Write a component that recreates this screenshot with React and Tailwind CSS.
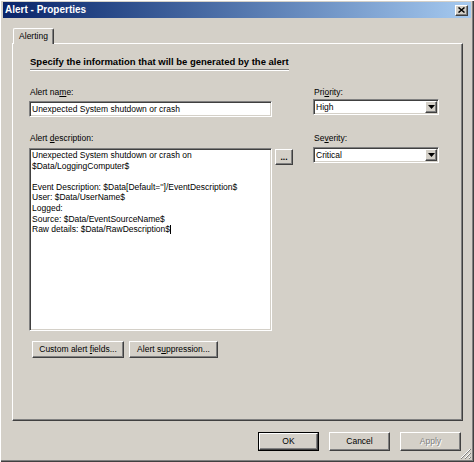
import React from 'react';

const sunken =
  'border border-t-[#808080] border-l-[#808080] border-b-white border-r-white shadow-[inset_1px_1px_#404040,inset_-1px_-1px_#d4d0c8]';
const raised =
  'border border-t-white border-l-white border-b-[#404040] border-r-[#404040] shadow-[inset_-1px_-1px_#808080,inset_1px_1px_#d4d0c8]';

const Dropdown = ({ value }) => (
  <div className={`flex items-center h-[16px] w-[126px] bg-white ${sunken}`}>
    <span className="flex-1 pl-[2px] text-[8.5px] leading-none">{value}</span>
    <div
      className={`w-[12px] h-[12px] mr-px flex items-center justify-center bg-[#d4d0c8] ${raised}`}
    >
      <svg width="7" height="4" viewBox="0 0 7 4">
        <path d="M0 0h7L3.5 4z" fill="#000" />
      </svg>
    </div>
  </div>
);

const Button = ({ children, className = '', disabled }) => (
  <div
    className={`flex items-center justify-center bg-[#d4d0c8] text-[8.5px] leading-none ${raised} ${className} ${
      disabled ? 'text-[#808080] [text-shadow:1px_1px_#fff]' : 'text-black'
    }`}
  >
    <span>{children}</span>
  </div>
);

const Label = ({ children, className = '' }) => (
  <div className={`ml-px text-[8.5px] leading-[12px] ${className}`}>{children}</div>
);

const description = [
  'Unexpected System shutdown or crash on',
  '$Data/LoggingComputer$',
  '',
  "Event Description: $Data[Default='']/EventDescription$",
  'User: $Data/UserName$',
  'Logged:',
  'Source: $Data/EventSourceName$',
];

export default function App() {
  return (
    <div className="relative w-[474px] h-[462px] bg-[#d4d0c8] flex flex-col px-[3px] pt-[2px] font-['Liberation_Sans',Arial,sans-serif] text-black shadow-[inset_1px_1px_#fff,inset_-1px_-1px_#404040,inset_-2px_-2px_#808080]">
      {/* title bar */}
      <div className="h-[16px] flex items-center justify-between bg-linear-to-r from-[#0a246a] to-[#a6caf0] pl-[2px] pr-[3px]">
        <span className="text-white font-bold text-[10px] leading-none">Alert - Properties</span>
        <div className={`w-[13px] h-[11px] flex items-center justify-center bg-[#d4d0c8] ${raised}`}>
          <svg width="7" height="6" viewBox="0 0 7 6">
            <path d="M0.5 0.5L6.5 5.5M6.5 0.5L0.5 5.5" stroke="#000" strokeWidth="1.5" />
          </svg>
        </div>
      </div>

      {/* tab + page */}
      <div className="flex flex-col pl-[9px] pt-[10px]">
        <div className="relative z-10 -mb-px ml-px w-[41px] h-[16px] bg-[#d4d0c8] border-l border-t border-white border-r border-r-[#404040] rounded-t-[2px] shadow-[inset_-1px_0_#808080] flex items-center justify-center">
          <span className="text-[8.5px] leading-none">Alerting</span>
        </div>
        <div className="w-[451px] h-[378px] border border-t-white border-l-white border-r-[#404040] border-b-[#404040] shadow-[inset_-1px_-1px_#808080] pl-[16px] pt-[12px]">
          <div className="ml-px w-fit font-bold text-[9.5px] leading-[12px] pb-px border-b border-[#808080] shadow-[0_1px_#fff]">
            Specify the information that will be generated by the alert
          </div>

          <div className="flex mt-[16px]">
            <div className="w-[264px] flex flex-col">
              <Label className="mb-[3px]">
                Alert na<u>m</u>e:
              </Label>
              <div className={`w-[243px] h-[16px] bg-white flex items-center pl-[2px] ${sunken}`}>
                <span className="text-[8.5px] leading-none">Unexpected System shutdown or crash</span>
              </div>

              <Label className="mt-[15px] mb-[4px]">
                Alert <u>d</u>escription:
              </Label>
              <div className="flex gap-[3px]">
                <div className={`w-[243px] h-[183px] bg-white pl-[2px] pt-px ${sunken}`}>
                  {description.map((line, i) => (
                    <div key={i} className="text-[8.5px] leading-[10.6px] h-[10.6px] whitespace-pre">
                      {line}
                    </div>
                  ))}
                  <div className="text-[8.5px] leading-[10.6px] h-[10.6px] flex items-center">
                    <span>Raw details: $Data/RawDescription$</span>
                    <span className="inline-block w-px h-[9px] bg-black" />
                  </div>
                </div>
                <Button className="w-[18px] h-[16px] mt-px font-bold">...</Button>
              </div>

              <div className="flex gap-[5px] mt-[10px] ml-[3px]">
                <Button className="w-[92px] h-[17px]">
                  Custom alert <u>f</u>ields...
                </Button>
                <Button className="w-[89px] h-[17px]">
                  Alert s<u>u</u>ppression...
                </Button>
              </div>
            </div>

            <div className="ml-[20px] w-[126px] flex flex-col">
              <Label className="mb-px">
                Pri<u>o</u>rity:
              </Label>
              <Dropdown value="High" />
              <Label className="mt-[17px] mb-[3px]">
                Se<u>v</u>erity:
              </Label>
              <Dropdown value="Critical" />
            </div>
          </div>
        </div>
      </div>

      {/* footer buttons */}
      <div className="flex justify-end gap-[10px] mt-[11px] pr-[10px]">
        <div className="w-[61px] h-[19px] border border-black flex">
          <Button className="flex-1">OK</Button>
        </div>
        <Button className="w-[61px] h-[19px]">Cancel</Button>
        <Button className="w-[61px] h-[19px]" disabled>
          Apply
        </Button>
      </div>

      {/* size grip */}
      <svg className="absolute right-[3px] bottom-[3px]" width="11" height="11" viewBox="0 0 11 11">
        <path d="M10 1L1 10M10 5L5 10M10 9L9 10" stroke="#fff" strokeWidth="1" />
        <path d="M11 1L1 11M11 5L5 11M11 9L9 11" stroke="#808080" strokeWidth="1" />
      </svg>
    </div>
  );
}
